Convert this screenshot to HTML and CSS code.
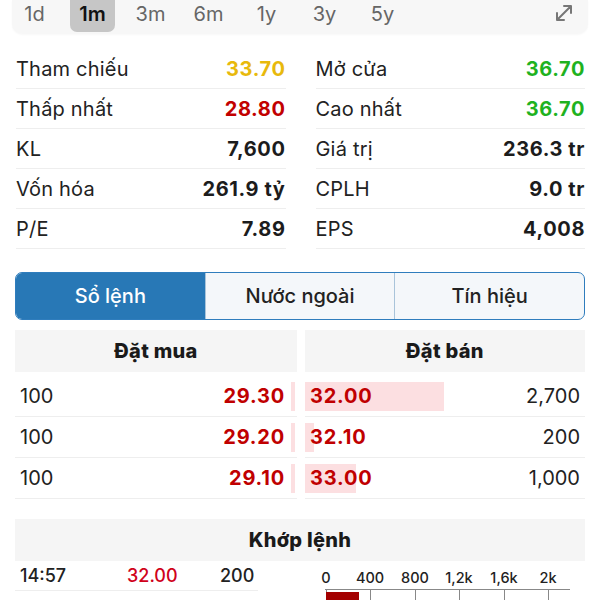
FILE: index.html
```html
<!DOCTYPE html>
<html>
<head>
  <meta charset="utf-8">
  <link rel="stylesheet" href="styles.css">
</head>
<body>

<div class="range">
  <a class="range-item">1d</a>
  <a class="range-item active">1m</a>
  <a class="range-item">3m</a>
  <a class="range-item">6m</a>
  <a class="range-item">1y</a>
  <a class="range-item">3y</a>
  <a class="range-item">5y</a>
  <svg class="expand" width="22" height="22" viewBox="0 0 22 22">
    <path d="M4 18 L18 4 M11 4 H18 V11 M4 11 V18 H11" fill="none" stroke="#777" stroke-width="2" stroke-linecap="round" stroke-linejoin="round"/>
  </svg>
</div>

<div class="stats">
  <div class="stat-col">
    <div class="stat"><span>Tham chiếu</span><b class="ref">33.70</b></div>
    <div class="stat"><span>Thấp nhất</span><b class="down">28.80</b></div>
    <div class="stat"><span>KL</span><b>7,600</b></div>
    <div class="stat"><span>Vốn hóa</span><b>261.9 tỷ</b></div>
    <div class="stat"><span>P/E</span><b>7.89</b></div>
  </div>
  <div class="stat-col">
    <div class="stat"><span>Mở cửa</span><b class="up">36.70</b></div>
    <div class="stat"><span>Cao nhất</span><b class="up">36.70</b></div>
    <div class="stat"><span>Giá trị</span><b>236.3 tr</b></div>
    <div class="stat"><span>CPLH</span><b>9.0 tr</b></div>
    <div class="stat"><span>EPS</span><b>4,008</b></div>
  </div>
</div>

<div class="tabs">
  <a class="tab active">Sổ lệnh</a>
  <a class="tab">Nước ngoài</a>
  <a class="tab">Tín hiệu</a>
</div>

<div class="book">
  <div class="book-side buy">
    <div class="book-head">Đặt mua</div>
    <div class="book-row"><span class="bar" style="width:4px"></span><span class="vol">100</span><b class="price">29.30</b></div>
    <div class="book-row"><span class="bar" style="width:4px"></span><span class="vol">100</span><b class="price">29.20</b></div>
    <div class="book-row"><span class="bar" style="width:4px"></span><span class="vol">100</span><b class="price">29.10</b></div>
  </div>
  <div class="book-side sell">
    <div class="book-head">Đặt bán</div>
    <div class="book-row"><span class="bar" style="width:139px"></span><b class="price">32.00</b><span class="vol">2,700</span></div>
    <div class="book-row"><span class="bar" style="width:9px"></span><b class="price">32.10</b><span class="vol">200</span></div>
    <div class="book-row"><span class="bar" style="width:51px"></span><b class="price">33.00</b><span class="vol">1,000</span></div>
  </div>
</div>

<div class="match-head">Khớp lệnh</div>
<div class="match">
  <div class="match-list">
    <div class="match-row"><span>14:57</span><span class="down-txt">32.00</span><span>200</span></div>
  </div>
  <svg class="chart" width="280" height="40" viewBox="0 0 280 40">
    <g font-family="Inter, sans-serif" font-size="14.5" font-weight="500" fill="#222" text-anchor="middle">
      <text x="16" y="22">0</text>
      <text x="60" y="22">400</text>
      <text x="105" y="22">800</text>
      <text x="149" y="22">1,2k</text>
      <text x="194" y="22">1,6k</text>
      <text x="238" y="22">2k</text>
    </g>
    <path d="M15 28.5 H260 M16.5 28 V40 M60.5 28 V40 M105.5 28 V40 M149.5 28 V40 M194.5 28 V40 M238.5 28 V40" stroke="#888" stroke-width="1" fill="none"/>
    <rect x="16" y="31" width="33" height="9" fill="#a30000"/>
  </svg>
</div>

</body>
</html>
```

FILE: styles.css
```css
body {
  margin: 0;
  background-color: #fff;
  font-family: Inter, "Noto Sans", sans-serif;
  color: #222;
  width: 600px;
  height: 600px;
  overflow: hidden;
}

/* time range bar */
.range {
  margin: 0 12px;
  height: 34px;
  background-color: #f7f7f7;
  border-radius: 0 0 10px 10px;
  display: flex;
  align-items: flex-start;
  gap: 13px;
  padding-right: 13px;
  box-shadow: 0 1px 2px rgba(0,0,0,0.03);
}

.range-item {
  width: 45px;
  height: 32px;
  line-height: 28px;
  text-align: center;
  font-size: 20px;
  color: #666;
}

.range-item.active {
  background-color: #c6c6c6;
  border-radius: 0 0 7px 7px;
  color: #111;
  font-weight: 600;
}

.expand {
  margin-left: auto;
  margin-top: 2px;
}

/* stats */
.stats {
  margin-top: 15px;
  padding: 0 15px 0 16px;
  display: grid;
  grid-template-columns: 1fr 1fr;
  column-gap: 30px;
}

.stat {
  height: 39px;
  border-bottom: 1px solid #eeeeee;
  display: flex;
  justify-content: space-between;
  align-items: center;
  font-size: 20px;
  letter-spacing: 0.2px;
}

.stat b {
  font-weight: 700;
  color: #1c1c1c;
  letter-spacing: 0.6px;
}

.stat b.ref { color: #e8b90c; }
.stat b.down { color: #c20000; }
.stat b.up { color: #1fb21f; }

/* tabs */
.tabs {
  margin: 23px 15px 0;
  height: 46px;
  display: flex;
  border: 1px solid #2f7dbd;
  border-radius: 7px;
  overflow: hidden;
  background-color: #f4f7fa;
}

.tab {
  flex: 1;
  display: flex;
  align-items: center;
  justify-content: center;
  font-size: 20px;
  font-weight: 500;
  color: #222;
  border-left: 1px solid #a9c4da;
}

.tab:first-child {
  border-left: none;
}

.tab.active {
  background-color: #2878b6;
  color: #fff;
}

/* order book */
.book {
  margin: 10px 15px 0;
  display: grid;
  grid-template-columns: 282px 280px;
  column-gap: 8px;
}

.book-head {
  height: 42px;
  margin-bottom: 4px;
  background-color: #f5f5f5;
  display: flex;
  align-items: center;
  justify-content: center;
  font-size: 20px;
  font-weight: 800;
  letter-spacing: 0.3px;
  color: #1a1a1a;
}

.book-row {
  position: relative;
  height: 40px;
  border-bottom: 1px solid #eeeeee;
  display: flex;
  align-items: center;
  justify-content: space-between;
  font-size: 20px;
}

.book-row .vol,
.book-row .price {
  position: relative;
}

.book-row .price {
  color: #c00000;
  font-weight: 700;
  letter-spacing: 0.8px;
}

.buy .book-row {
  padding: 0 12px 0 5px;
}

.sell .book-row {
  padding: 0 5px 0 5px;
}

.bar {
  position: absolute;
  top: 6px;
  bottom: 5px;
  background-color: #fcdfe1;
}

.buy .bar {
  right: 2px;
}

.sell .bar {
  left: 0;
}

/* matched orders */
.match-head {
  margin: 20px 15px 0;
  height: 42px;
  background-color: #f5f5f5;
  display: flex;
  align-items: center;
  justify-content: center;
  font-size: 20px;
  font-weight: 800;
  letter-spacing: 0.3px;
  color: #1a1a1a;
}

.match {
  display: flex;
  padding-left: 15px;
}

.match-list {
  width: 243px;
}

.match-row {
  height: 29px;
  border-bottom: 1px solid #eeeeee;
  padding-left: 5px;
  display: grid;
  grid-template-columns: 107px 93px auto;
  align-items: center;
  font-size: 18px;
  font-weight: 500;
}

.down-txt {
  color: #d0021b;
}

.chart {
  margin-left: 52px;
}
```
